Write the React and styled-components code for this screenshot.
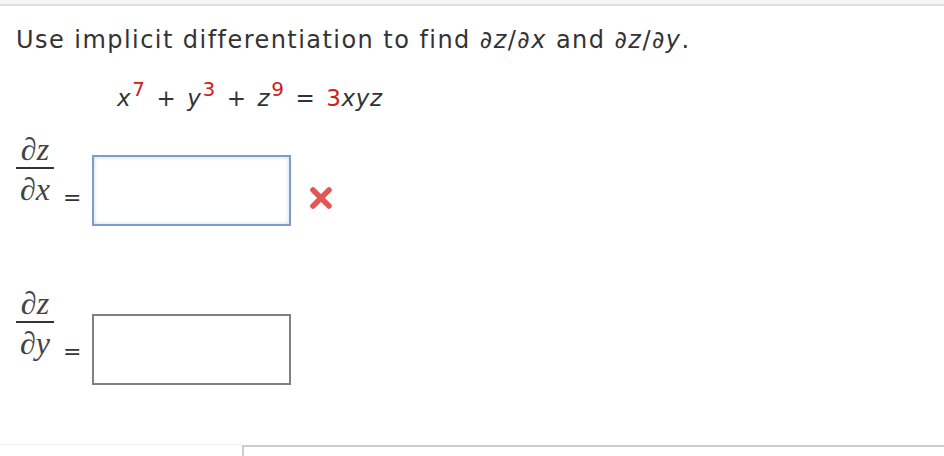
import styled, { createGlobalStyle } from "styled-components";

const Global = createGlobalStyle`
  html, body {
    margin: 0;
    padding: 0;
    background: #fff;
  }
  body {
    font-family: "DejaVu Sans", Verdana, sans-serif;
    color: #333;
  }
`;

const Page = styled.div`
  width: 944px;
  height: 456px;
  display: flex;
  flex-direction: column;
  overflow: hidden;
`;

const TopBand = styled.div`
  height: 4px;
  background: #f5f5f5;
  border-bottom: 2px solid #dddddd;
  flex: none;
`;

const Content = styled.div`
  flex: 1;
  padding: 0 0 0 16px;
`;

const Prompt = styled.p`
  margin: 20px 0 0;
  font-size: 24px;
  line-height: 28px;
  letter-spacing: 1.45px;
  white-space: nowrap;
`;

const Equation = styled.div`
  margin: 30px 0 0 101px;
  font-size: 23px;
  line-height: 28px;
  letter-spacing: 0.6px;
  word-spacing: 3px;
  white-space: nowrap;
`;

const V = styled.i`
  font-style: italic;
`;

const Num = styled.span`
  color: #cc2020;
`;

const Sup = styled.sup`
  color: #cc2020;
  font-size: 20px;
  line-height: 0;
  vertical-align: 10px;
  margin-left: 1px;
`;

const AnswerRow = styled.div`
  display: flex;
  align-items: flex-start;
  margin-top: ${(p) => p.$top}px;
`;

const Fraction = styled.div`
  display: flex;
  flex-direction: column;
  align-items: center;
  width: 38px;
  font-family: "Liberation Serif", "DejaVu Serif", serif;
  font-style: italic;
  font-size: 32px;
  line-height: 30px;
  color: #444;
`;

const Bar = styled.div`
  align-self: stretch;
  height: 2px;
  background: #333;
  margin: 3px 0 5px;
`;

const Equals = styled.span`
  font-size: 22px;
  line-height: 26px;
  margin: 51px 11px 0 9px;
  color: #333;
`;

const AnswerBox = styled.input`
  box-sizing: border-box;
  width: 199px;
  height: 71px;
  margin-top: ${(p) => p.$offset}px;
  border: 2px solid ${(p) => (p.$active ? "#7b9dc7" : "#808080")};
  box-shadow: ${(p) => (p.$active ? "inset 0 0 4px #c3d6ee" : "none")};
  background: #fff;
  outline: none;
  padding: 0 6px;
  font-size: 18px;
`;

const Mark = styled.svg`
  width: 26px;
  height: 26px;
  margin: 51px 0 0 17px;
`;

const Footer = styled.div`
  display: flex;
  height: 12px;
  flex: none;
`;

const FooterLeft = styled.div`
  width: 242px;
  border-top: 1px solid #eeeeee;
`;

const FooterRight = styled.div`
  flex: 1;
  margin-top: 1px;
  border-top: 2px solid #cccccc;
  border-left: 2px solid #cccccc;
`;

const WrongMark = () => (
  <Mark viewBox="0 0 26 26">
    <path d="M5 5 L21 21 M21 5 L5 21" stroke="#e25656" strokeWidth="5.5" strokeLinecap="round" />
  </Mark>
);

const Derivative = ({ wrt }) => (
  <Fraction>
    <span>∂z</span>
    <Bar />
    <span>∂{wrt}</span>
  </Fraction>
);

export default function App() {
  return (
    <Page>
      <Global />
      <TopBand />
      <Content>
        <Prompt>
          Use implicit differentiation to find ∂<V>z</V>/∂<V>x</V> and ∂<V>z</V>/∂<V>y</V>.
        </Prompt>
        <Equation>
          <V>x</V><Sup>7</Sup> + <V>y</V><Sup>3</Sup> + <V>z</V><Sup>9</Sup> = <Num>3</Num><V>xyz</V>
        </Equation>
        <AnswerRow $top={22}>
          <Derivative wrt="x" />
          <Equals>=</Equals>
          <AnswerBox $active $offset={21} />
          <WrongMark />
        </AnswerRow>
        <AnswerRow $top={62}>
          <Derivative wrt="y" />
          <Equals>=</Equals>
          <AnswerBox $offset={26} />
        </AnswerRow>
      </Content>
      <Footer>
        <FooterLeft />
        <FooterRight />
      </Footer>
    </Page>
  );
}
